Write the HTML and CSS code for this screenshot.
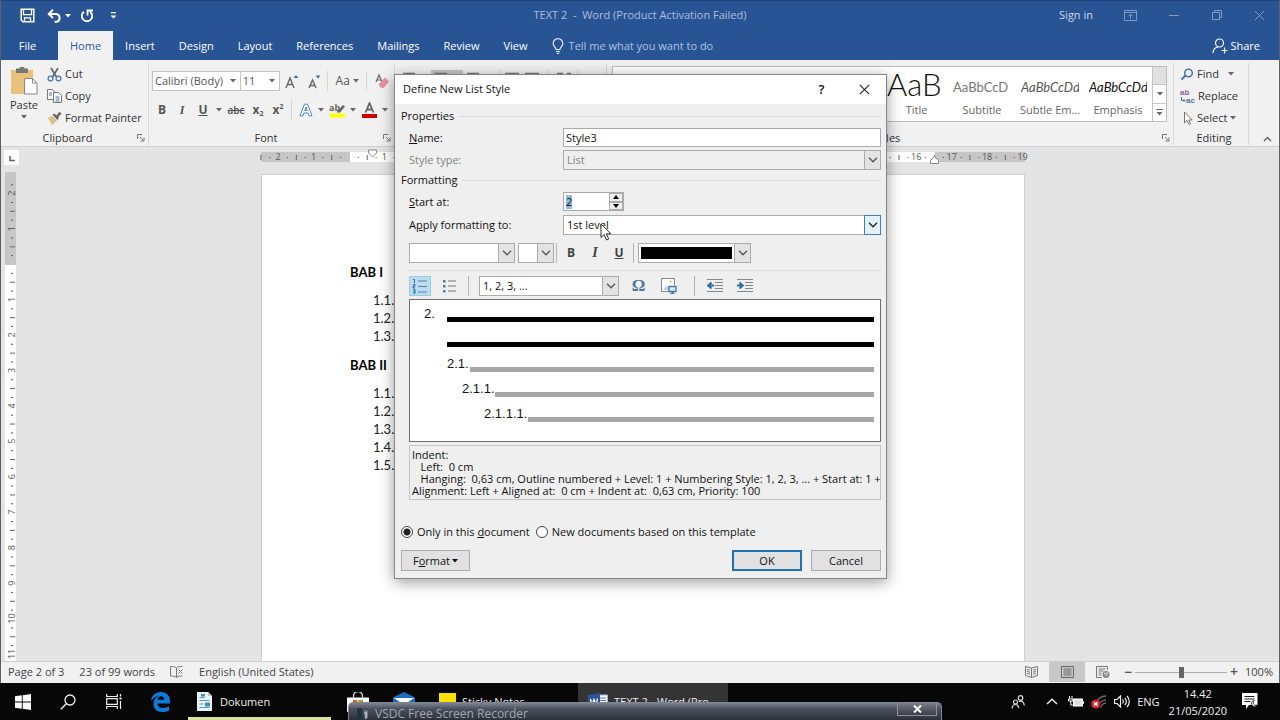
FILE: index.html
```html
<!DOCTYPE html>
<html lang="en">
<head>
<meta charset="utf-8">
<title>TEXT 2 - Word</title>
<link rel="stylesheet" href="styles.css">
</head>
<body>
<svg class="defs" aria-hidden="true">
  <symbol id="caret" viewBox="0 0 6 4"><path d="M0 0h6L3 3.5z" fill="currentColor"/></symbol>
  <symbol id="chev" viewBox="0 0 10 6"><path d="M1 .8l4 4 4-4" fill="none" stroke="currentColor" stroke-width="1.3"/></symbol>
  <symbol id="launch" viewBox="0 0 8 8"><path d="M.5 5V.5H5M3 3l3.5 3.5M7 3.5V7H3.5" fill="none" stroke="#777"/></symbol>
</svg>

<div class="app">
  <header class="titlebar">
    <div class="quick">
      <button aria-label="Save"><svg width="15" height="15" viewBox="0 0 15 15"><path d="M1.2 1.2h12.6v12.6H3L1.2 12z" fill="none" stroke="#fff" stroke-width="1.5"/><path d="M3.5 1.5v5.2h8V1.5M4.5 14V9.800h6V14" fill="none" stroke="#fff" stroke-width="1.3"/></svg></button>
      <button aria-label="Undo"><svg width="15" height="14" viewBox="0 0 15 14"><path d="M2 5h7.500a4 4 0 0 1 0 7.800H7.500M6 .8L1.800 5 6 9" fill="none" stroke="#fff" stroke-width="2"/></svg></button>
      <button class="narrow" aria-label="Undo list"><svg width="6" height="4"><use href="#caret"/></svg></button>
      <button aria-label="Redo"><svg width="14" height="14" viewBox="0 0 14 14"><path d="M4 2.800a5.200 5.200 0 1 0 6 0M7.500 6.500V1.500H13" fill="none" stroke="#fff" stroke-width="1.800"/></svg></button>
      <button aria-label="Customize"><svg width="7" height="8" viewBox="0 0 7 8"><path d="M1 .7h5" stroke="#fff" stroke-width="1.2"/><path d="M.5 3.500h6L3.500 6.500z" fill="#fff"/></svg></button>
    </div>
    <h1 class="doc-title">TEXT 2&nbsp; -&nbsp; Word (Product Activation Failed)</h1>
    <div class="window-tools">
      <a class="signin" href="#">Sign in</a>
      <button aria-label="Ribbon options"><svg width="13" height="11" viewBox="0 0 13 11"><path d="M.5.500h12v10H.500zM.5 2.500h12M6.500 9V4.500M4.500 6.200l2-2 2 2" fill="none" stroke="#7d9bc8"/></svg></button>
      <button aria-label="Minimize"><svg width="10" height="10"><path d="M0 5.500h10" stroke="#7d9bc8"/></svg></button>
      <button aria-label="Restore"><svg width="10" height="10" viewBox="0 0 10 10"><path d="M.5 2.500h7v7h-7zM2.500 2.500v-2h7v7h-2" fill="none" stroke="#7d9bc8"/></svg></button>
      <button aria-label="Close"><svg width="11" height="11" viewBox="0 0 11 11"><path d="M1 1l9 9M10 1l-9 9" stroke="#7d9bc8"/></svg></button>
    </div>
  </header>

  <nav class="tabs">
    <button class="tab file">File</button>
    <button class="tab active">Home</button>
    <button class="tab">Insert</button>
    <button class="tab">Design</button>
    <button class="tab">Layout</button>
    <button class="tab">References</button>
    <button class="tab">Mailings</button>
    <button class="tab">Review</button>
    <button class="tab">View</button>
    <button class="tell"><svg width="12" height="16" viewBox="0 0 12 16"><path d="M4 11.500C4 9 1.200 8.500 1.200 5.400a4.800 4.800 0 0 1 9.600 0C10.800 8.500 8 9 8 11.500zM4 13.500h4M4.800 15.300h2.400" fill="none" stroke="#dfe8f5" stroke-width="1.200"/></svg>Tell me what you want to do</button>
    <button class="share"><svg width="16" height="16" viewBox="0 0 16 16"><circle cx="7.500" cy="5" r="4" fill="none" stroke="#fff" stroke-width="1.200"/><path d="M1 15c.2-3.500 2-5.500 5-6M9.500 12.500h6M12.500 9.500v6" fill="none" stroke="#fff" stroke-width="1.200"/></svg>Share</button>
  </nav>

  <section class="ribbon">
    <div class="group clipboard">
      <div class="group-body">
        <button class="paste"><svg width="28" height="28" viewBox="0 0 28 28"><path d="M1 3h22v24H1z" fill="#e8c27a"/><path d="M6 1.500h3.500a2.500 2.500 0 0 1 5 0H18V6H6z" fill="#777"/><path d="M14.500 11.500h8l4.500 4.500v11H14.500z" fill="#fff" stroke="#888"/><path d="M22.500 11.500V16H27" fill="none" stroke="#888"/></svg><span>Paste</span><svg width="6" height="4"><use href="#caret"/></svg></button>
        <div class="stack">
          <button><svg width="15" height="15" viewBox="0 0 15 15"><path d="M4 1l5.500 9M11 1L5.500 10" stroke="#666" stroke-width="1.700"/><circle cx="3.500" cy="11.500" r="2.400" fill="none" stroke="#4a78ab" stroke-width="1.300"/><circle cx="11.500" cy="11.500" r="2.400" fill="none" stroke="#4a78ab" stroke-width="1.300"/></svg>Cut</button>
          <button><svg width="15" height="14" viewBox="0 0 15 14"><path d="M.5.500h5l2 2v8h-7z" fill="#fff" stroke="#777"/><path d="M6.500 3.500h5l3 3v7h-8z" fill="#fff" stroke="#777"/><path d="M2 4h3M2 6h3M8.500 8h4M8.500 10h4M8.500 12h4" stroke="#4a78ab"/></svg>Copy</button>
          <button><svg width="15" height="14" viewBox="0 0 15 14"><path d="M1 7l4-2.500 5 5L5 14z" fill="#e3bd80"/><path d="M5.500 3.500l2-1 2 2L12.500.800l2 2-3.200 3 .5 1.500-1.500 1.700z" fill="#666"/></svg>Format Painter</button>
        </div>
      </div>
      <div class="group-label"><span>Clipboard</span><button aria-label="Clipboard settings"><svg width="8" height="8"><use href="#launch"/></svg></button></div>
    </div>

    <div class="group font">
      <div class="group-body rows">
        <div class="row">
          <label class="combo family"><select aria-label="Font"><option>Calibri (Body)</option></select><svg width="6" height="4"><use href="#caret"/></svg></label>
          <label class="combo size"><select aria-label="Font size"><option>11</option></select><svg width="6" height="4"><use href="#caret"/></svg></label>
          <button class="t24" aria-label="Grow font"><svg width="14" height="15" viewBox="0 0 14 15"><path d="M1 14L5 4l4 10M2.500 10.500h5" fill="none" stroke="#666" stroke-width="1.400"/><path d="M8.500 4L11 1l2.500 3z" fill="#41719c"/></svg></button>
          <button class="t20" aria-label="Shrink font"><svg width="13" height="15" viewBox="0 0 13 15"><path d="M1 14L4.500 6 8 14M2.200 11.500h4.600" fill="none" stroke="#666" stroke-width="1.400"/><path d="M7.500 1.500h5L10 4.500z" fill="#41719c"/></svg></button>
          <i class="sep"></i>
          <button class="t32 case">Aa<svg width="6" height="4"><use href="#caret"/></svg></button>
          <i class="sep"></i>
          <button class="t24" aria-label="Clear formatting"><svg width="15" height="15" viewBox="0 0 15 15"><path d="M1 8L4 1l3 7M2 6h4" fill="none" stroke="#666" stroke-width="1.200"/><path d="M3.500 10.500L10 3.500l4 4-5.500 6.500H6z" fill="#e790a4"/></svg></button>
        </div>
        <div class="row">
          <button class="t20 b">B</button><button class="t20 i">I</button><button class="t22 u">U</button><button class="t10" aria-label="Underline style"><svg width="6" height="4"><use href="#caret"/></svg></button>
          <button class="t24 s">abc</button><button class="t20 x">x<sub>2</sub></button><button class="t20 x">x<sup>2</sup></button>
          <i class="sep"></i>
          <button class="t22" aria-label="Text effects"><svg width="14" height="14" viewBox="0 0 14 14"><path d="M1 12.800L5.500 1.200h3L13 12.800h-3L9.200 10H4.800L4 12.800zM5.700 7.500h2.600L7 4z" fill="#fff" stroke="#4e88c0"/></svg></button><button class="t8" aria-label="Effects list"><svg width="6" height="4"><use href="#caret"/></svg></button>
          <button class="t24" aria-label="Highlight"><svg width="17" height="16" viewBox="0 0 17 16"><path d="M1 11.500h15v4H1z" fill="#ff0"/><text x="0" y="9" font-size="9" font-weight="bold" fill="#666">ab</text><path d="M8 9.500l6-6.500 2 1.500-5 6H8z" fill="#666"/></svg></button><button class="t8" aria-label="Highlight list"><svg width="6" height="4"><use href="#caret"/></svg></button>
          <button class="t24" aria-label="Font color"><svg width="15" height="16" viewBox="0 0 15 16"><path d="M0 12h15v4H0z" fill="#d00000"/><path d="M3.500 10.500L7.500 1l4 9.500M5 7.500h5" fill="none" stroke="#666" stroke-width="1.800"/></svg></button><button class="t8" aria-label="Color list"><svg width="6" height="4"><use href="#caret"/></svg></button>
        </div>
      </div>
      <div class="group-label"><span>Font</span><button aria-label="Font settings"><svg width="8" height="8"><use href="#launch"/></svg></button></div>
    </div>

    <div class="group paragraph">
      <div class="group-body">
        <svg width="180" height="16" viewBox="0 0 180 16"><path d="M30 0h32v16H30z" fill="#c5c5c5"/><path d="M2 3.500h12M34 3.500h12M66 3.500h12M104 3.500h14M124 3.500h14M156 3.500h6M166 3.500h4" stroke="#777" stroke-width="1.500"/><path d="M98.500 0v16M146.500 0v16M176.500 0v16" stroke="#d5d5d5"/></svg>
      </div>
    </div>

    <div class="group styles">
      <div class="group-body">
        <div class="gallery">
          <div class="cards">
            <button class="card"><b class="big">AaB</b><span>Title</span></button>
            <button class="card"><b class="subtitle">AaBbCcD</b><span>Subtitle</span></button>
            <button class="card"><b class="subtle">AaBbCcDd</b><span>Subtle Em...</span></button>
            <button class="card"><b class="emph">AaBbCcDd</b><span>Emphasis</span></button>
          </div>
          <div class="scroller">
            <button class="off" aria-label="Previous styles"></button>
            <button aria-label="Next styles"><svg width="6" height="4"><use href="#caret"/></svg></button>
            <button aria-label="More styles"><svg width="7" height="7" viewBox="0 0 7 7"><path d="M0 .5h7" stroke="#666"/><path d="M.5 3h6l-3 3.500z" fill="#666"/></svg></button>
          </div>
        </div>
      </div>
      <div class="group-label"><span>Styles</span><button aria-label="Style settings"><svg width="8" height="8"><use href="#launch"/></svg></button></div>
    </div>

    <div class="group editing">
      <div class="group-body">
        <div class="stack">
          <button><svg width="14" height="13" viewBox="0 0 14 13"><circle cx="8.500" cy="5" r="3.800" fill="none" stroke="#4a74a8" stroke-width="1.500"/><path d="M5.500 7.500L1.500 11.500" stroke="#4a74a8" stroke-width="2.200"/></svg>Find<svg class="gap" width="6" height="4"><use href="#caret"/></svg></button>
          <button class="replace"><svg width="15" height="18" viewBox="0 0 15 18"><text x="0" y="8" fill="#8a5f9e">ab</text><text x="6" y="16" fill="#4a74a8">ac</text><path d="M1.500 10v3.500h3M3.500 12l1.500 1.500L3.500 15" fill="none" stroke="#4a74a8"/></svg>Replace</button>
          <button><svg width="14" height="14" viewBox="0 0 14 14"><path d="M4.500 1v11l2.600-2.500L9 13.500l1.500-.8L8.700 9h3.500z" fill="#fff" stroke="#777"/></svg>Select<svg width="6" height="4"><use href="#caret"/></svg></button>
        </div>
      </div>
      <div class="group-label"><span>Editing</span></div>
    </div>
    <button class="collapse" aria-label="Collapse ribbon"><svg width="9" height="6" viewBox="0 0 9 6"><path d="M1 5l3.500-3.500L8 5" fill="none" stroke="#666" stroke-width="1.500"/></svg></button>
  </section>

  <main class="workspace">
    <div class="corner"><svg width="15" height="15" viewBox="0 0 15 15"><path d="M0 0h15v15H0z" fill="#fbfbfb"/><path d="M6 6v4.500h5" fill="none" stroke="#666" stroke-width="1.600"/></svg></div>
    <div class="hrule"><svg id="hruler" width="764" height="15" viewBox="0 0 764 15"></svg></div>
    <div class="vrule"><svg id="vruler" width="12" height="900" viewBox="0 0 12 900"></svg></div>
    <div class="canvas">
      <article class="page">
        <h2>BAB I</h2>
        <ul><li>1.1.</li><li>1.2.</li><li>1.3.</li></ul>
        <h2>BAB II</h2>
        <ul><li>1.1.</li><li>1.2.</li><li>1.3.</li><li>1.4.</li><li>1.5.</li></ul>
      </article>
    </div>
  </main>

  <footer class="status">
    <span>Page 2 of 3</span><span>23 of 99 words</span>
    <svg width="14" height="12" viewBox="0 0 14 12"><path d="M6.500 2C5 .5 3 .5.500.500v9.500c2.500 0 4.500 0 6 1.500zM6.500 2C8 .5 10 .5 12.500.500M6.500 11.500c1.500-1.500 3.500-1.500 6-1.500M8.500 3.500l4 4M12.500 3.500l-4 4" fill="none" stroke="#777"/></svg>
    <span>English (United States)</span>
    <div class="views">
      <button aria-label="Read mode"><svg width="13" height="12" viewBox="0 0 13 12"><path d="M6.500 2L.5.500v9l6 2 6-2v-9zM6.500 2v9M2 3.500l3 .7M2 5.500l3 .7M2 7.500l3 .7M11 3.500l-3 .7M11 5.500l-3 .7M11 7.500l-3 .7" fill="none" stroke="#777"/></svg></button>
      <button class="on" aria-label="Print layout"><svg width="13" height="12" viewBox="0 0 13 12"><path d="M.5.500h12v11H.500zM2.500 3h8M2.500 5h8M2.500 7h8M2.500 9h8" fill="none" stroke="#666"/></svg></button>
      <button aria-label="Web layout"><svg width="14" height="13" viewBox="0 0 14 13"><path d="M11.500 4V.500H.500v11H6M2.500 3h7M2.500 5h5M2.500 7h3M2.500 9h3" fill="none" stroke="#777"/><circle cx="10" cy="8.500" r="3.500" fill="#888"/><path d="M8 7l2 1 .5 2M10.500 6l1.500 2" stroke="#eee" fill="none"/></svg></button>
    </div>
    <div class="zoom"><button>−</button><input type="range" min="0" max="200" value="100" aria-label="Zoom"><button>+</button></div>
    <span class="pct">100%</span>
  </footer>

  <section class="dialog" role="dialog" aria-label="Define New List Style">
    <header class="dlg-title"><h2>Define New List Style</h2>
      <button class="help" aria-label="Help">?</button>
      <button aria-label="Close dialog"><svg width="11" height="11" viewBox="0 0 11 11"><path d="M.8.800l9.400 9.400M10.200.800L.800 10.200" stroke="#222" stroke-width="1.100"/></svg></button>
    </header>
    <form class="dlg-body">
      <div class="legend"><span>Properties</span></div>
      <div class="fields">
        <label for="name"><u>N</u>ame:</label><input id="name" class="box" value="Style3">
        <label for="type" class="dim">Style type:</label>
        <div class="drop dim"><select id="type" disabled><option>List</option></select><span><svg width="10" height="6"><use href="#chev"/></svg></span></div>
      </div>
      <div class="legend"><span>Formatting</span></div>
      <div class="fields second">
        <label for="start"><u>S</u>tart at:</label>
        <div class="spin"><input id="start" value="2"><div><button type="button" aria-label="Up"><svg width="6" height="4" viewBox="0 0 6 4"><path d="M0 4h6L3 0z"/></svg></button><button type="button" aria-label="Down"><svg width="6" height="4" viewBox="0 0 6 4"><path d="M0 0h6L3 4z"/></svg></button></div></div>
        <label for="apply">A<u>p</u>ply formatting to:</label>
        <div class="drop hot"><select id="apply"><option>1st level</option></select><span><svg width="10" height="6"><use href="#chev"/></svg></span></div>
      </div>
      <div class="tools">
        <div class="drop fam"><select aria-label="Level font"><option></option></select><span><svg width="10" height="6"><use href="#chev"/></svg></span></div>
        <div class="drop siz"><select aria-label="Level size"><option></option></select><span><svg width="10" height="6"><use href="#chev"/></svg></span></div>
        <i class="bar"></i>
        <button type="button" class="b">B</button><button type="button" class="i">I</button><button type="button" class="u">U</button>
        <i class="bar"></i>
        <div class="drop color"><select aria-label="Color"><option></option></select><em></em><span><svg width="10" height="6"><use href="#chev"/></svg></span></div>
      </div>
      <div class="tools lower">
        <button type="button" class="num" aria-label="Numbering"><svg width="16" height="16" viewBox="0 0 16 16"><path d="M6 3h9M6 8.500h9M6 14h9" stroke="#6a7d8c" stroke-width="1.200"/><path d="M1 1.500h1.500V5M1 6.500h2v1.700H1V10h2.200M1 11.700h2v3.500H1M1.500 13.500H3" fill="none" stroke="#2f6a9c"/></svg></button>
        <button type="button" class="bul" aria-label="Bullets"><svg width="13" height="14" viewBox="0 0 13 14"><path d="M5 2h8M5 7h8M5 12h8" stroke="#777" stroke-width="1.200"/><path d="M0 1h2.500v2.500H0zM0 6h2.500v2.500H0zM0 11h2.500v2.500H0z" fill="#4f7fa8"/></svg></button>
        <i class="bar"></i>
        <div class="drop style"><select aria-label="Number style"><option>1, 2, 3, ...</option></select><span><svg width="10" height="6"><use href="#chev"/></svg></span></div>
        <button type="button" class="omega" aria-label="Symbol">Ω</button>
        <button type="button" class="pic" aria-label="Picture"><svg width="16" height="16" viewBox="0 0 16 16"><path d="M8 13.500H.500V.500h13V7" fill="#fff" stroke="#888"/><path d="M2.500 11l3-3.500 2.500 2V12H2.500z" fill="#c3d4e0"/><circle cx="9.500" cy="3.500" r="1" fill="#e0b070"/><path d="M8 8.500h7v5H8zM11.500 13.500v2M9.500 15.500h4" fill="#dcebf5" stroke="#41789f" stroke-width="1.300"/></svg></button>
        <i class="bar"></i>
        <button type="button" class="ind" aria-label="Decrease indent"><svg width="16" height="14" viewBox="0 0 16 14"><path d="M0 .5h16M8 3.500h8M8 6.500h8M8 9.500h8M0 12.500h16" stroke="#888"/><path d="M7 6.500H2M4.500 3.500L1.200 6.500l3.300 3" fill="none" stroke="#2f6a9c" stroke-width="1.800"/></svg></button>
        <button type="button" class="ind" aria-label="Increase indent"><svg width="16" height="14" viewBox="0 0 16 14"><path d="M0 .5h16M8 3.500h8M8 6.500h8M8 9.500h8M0 12.500h16" stroke="#888"/><path d="M0 6.500h5M2.500 3.500l3.300 3-3.300 3" fill="none" stroke="#2f6a9c" stroke-width="1.800"/></svg></button>
      </div>
      <div class="preview">
        <div class="line l1"><span>2.</span><i></i></div>
        <div class="line l1"><span></span><i></i></div>
        <div class="line l2"><span>2.1.</span><i></i></div>
        <div class="line l3"><span>2.1.1.</span><i></i></div>
        <div class="line l4"><span>2.1.1.1.</span><i></i></div>
      </div>
      <div class="desc">Indent:
   Left:  0 cm
   Hanging:  0,63 cm, Outline numbered + Level: 1 + Numbering Style: 1, 2, 3, ... + Start at: 1 +
Alignment: Left + Aligned at:  0 cm + Indent at:  0,63 cm, Priority: 100</div>
      <div class="radios">
        <label><input type="radio" name="scope" checked><span>Only in this <u>d</u>ocument</span></label>
        <label><input type="radio" name="scope"><span>New documents based on this template</span></label>
      </div>
      <div class="actions">
        <button type="button" class="btn"><span>F<u>o</u>rmat</span><svg width="6" height="4"><use href="#caret"/></svg></button>
        <button type="button" class="btn ok">OK</button>
        <button type="button" class="btn">Cancel</button>
      </div>
    </form>
    <svg class="pointer" width="12" height="18" viewBox="0 0 12 18"><path d="M1 1v13.500l3.200-3 2.300 5.500 2.200-1-2.300-5.200H11z" fill="#fff" stroke="#333"/></svg>
  </section>
</div>

<footer class="taskbar">
  <button class="sq" aria-label="Start"><svg width="16" height="16" viewBox="0 0 16 16"><path d="M0 2.300l6.800-1v6.200H0zM7.700 1.200L16 0v7.500H7.700zM0 8.400h6.800v6.300L0 13.700zM7.700 8.400H16V16l-8.300-1.200z" fill="#fff"/></svg></button>
  <button class="sq" aria-label="Search"><svg width="16" height="16" viewBox="0 0 16 16"><circle cx="10" cy="6" r="5" fill="none" stroke="#eee" stroke-width="1.300"/><path d="M6.500 9.500L.800 15.200" stroke="#eee" stroke-width="1.500"/></svg></button>
  <button class="sq" aria-label="Task view"><svg width="16" height="15" viewBox="0 0 16 15"><path d="M.7 0v2.500h10.600V0M.7 15v-2.500h10.600V15M.7 4.700h10.600v5.600H.700zM14.500 0v2.500M14.500 7v8" fill="none" stroke="#eee" stroke-width="1.200"/><path d="M13.500 3.500h2v2h-2z" fill="#eee"/></svg></button>
  <button class="sq edge" aria-label="Edge"><svg width="19" height="20" viewBox="0 0 19 20"><path d="M0 9C.5 3.500 4.500 0 10 0c5.500 0 9 4 9 9v2.500H6.500c.3 3 2.500 4.500 5.500 4.500 2 0 4-.5 6-1.700v4.200c-2 1-4.300 1.500-7 1.500-5 0-8.500-3-8.500-8 0-3.500 1.800-6.300 5-7.700C5.800 4.200 2.500 5.500 0 9zM6.700 7.800h6.500c0-2.300-1-3.600-3.100-3.600-2 0-3.100 1.400-3.400 3.600z" fill="#0b7bdb"/></svg></button>
  <button class="task doc"><svg width="15" height="19" viewBox="0 0 15 19"><path d="M0 0h11l4 4v15H0z" fill="#e9f2f5"/><path d="M11 0v4h4" fill="#b5c8d0"/><path d="M2.500 5.500h5M2.500 8.500h10M2.500 15.500h10M2.500 12h4" stroke="#5b9bbd"/><path d="M8 10.500h5v4H8zM4 2h4v2.500H4z" fill="#3f8fc0"/></svg>Dokumen</button>
  <button class="sq store" aria-label="Store"><svg width="22" height="20" viewBox="0 0 22 20"><path d="M6.500 5.500V4a4 4 0 0 1 9 0v1.500" fill="none" stroke="#ddd" stroke-width="1.300"/><path d="M0 5.500h22V20H0z" fill="#fff"/><path d="M6 8h4.500v4.500H6z" fill="#e05524"/><path d="M11.500 8H16v4.500h-4.500z" fill="#7cb32a"/><path d="M6 13.500h4.500V18H6z" fill="#0b90d8"/><path d="M11.500 13.500H16V18h-4.500z" fill="#f3b520"/></svg></button>
  <button class="sq" aria-label="Mail"><svg width="22" height="20" viewBox="0 0 22 20"><path d="M0 5.500L11 0l11 5.500V20H0z" fill="#1a6fc0"/><path d="M1 6h20l-10 7z" fill="#fff"/></svg></button>
  <button class="task sticky"><svg width="17" height="18" viewBox="0 0 17 18"><path d="M0 0h17v10l-6 .5-2 7.500H0z" fill="#ffe000"/><path d="M17 9.500l-5 1L8 18z" fill="#a89200"/></svg>Sticky Notes</button>
  <button class="task word"><svg width="20" height="18" viewBox="0 0 20 18"><path d="M10 2h9.500v14H10z" fill="#fff" stroke="#9cb6dc"/><path d="M12 5h6M12 7.500h6M12 10h6M12 12.500h6" stroke="#5a7fc0"/><path d="M0 2l12-2v18L0 16z" fill="#2a5599"/><path d="M2.500 6l1.500 6 2-5.500 2 5.500 1.500-6.500" fill="none" stroke="#fff" stroke-width="1.300"/></svg>TEXT 2 - Word (Pro...</button>
  <div class="tray">
    <svg width="14" height="14" viewBox="0 0 14 14"><circle cx="9.500" cy="3" r="2.300" fill="none" stroke="#ddd" stroke-width="1.200"/><circle cx="4.500" cy="7" r="2" fill="none" stroke="#ddd" stroke-width="1.200"/><path d="M1 13.500c.3-2.500 1.500-4 3.500-4s3 1.500 3.300 3.500M8 6.500c3-1 5 .5 5.300 4" fill="none" stroke="#ddd" stroke-width="1.200"/></svg>
    <svg class="up" width="12" height="7" viewBox="0 0 12 7"><path d="M1 6l5-4.700L11 6" fill="none" stroke="#eee" stroke-width="1.400"/></svg>
    <svg width="16" height="11" viewBox="0 0 16 11"><path d="M5.700 3.200h8.500v6.500H5.700z" fill="#ddd" stroke="#fff" stroke-width="1.400"/><path d="M15.300 5v3M1.500 0v2.500M4 0v2.500M.5 3h4.500v2H.500zM2.800 5v4h2" fill="none" stroke="#fff"/></svg>
    <svg width="16" height="15" viewBox="0 0 16 15"><path d="M7 14a8 8 0 0 1 8-8M10 14a5 5 0 0 1 5-5M5 12C5 6 9 2 15 2" fill="none" stroke="#666" stroke-width="1.300"/><circle cx="4.800" cy="10" r="4.500" fill="#d8222e"/><path d="M3 8.200l3.600 3.600M6.600 8.200L3 11.800" stroke="#fff" stroke-width="1.300"/></svg>
    <svg width="16" height="13" viewBox="0 0 16 13"><path d="M.6 4.500h2.500L6.500 1v11L3.100 8.500H.600zM8.500 4.500c1 1 1 3 0 4M10.800 2.800c2 2 2 5.400 0 7.400M13 1c3 3 3 8 0 11" fill="none" stroke="#eee" stroke-width="1.200"/></svg>
    <span class="lang">ENG</span>
    <time class="clock">14.42<br>21/05/2020</time>
    <svg width="16" height="17" viewBox="0 0 16 17"><path d="M0 0h15.500v12H7l-3 4v-4H0z" fill="#fff"/><path d="M2.500 3.500h10M2.500 6h10M2.500 8.500h6" stroke="#222"/><path d="M12.500 7.500a3 3 0 1 0 2.500 4.500 2.500 2.500 0 0 1-2.500-4.500z" fill="#fff" stroke="#222" stroke-width=".800"/></svg>
  </div>
</footer>

<aside class="recorder">
  <svg width="14" height="14" viewBox="0 0 14 14"><path d="M0 1h5v12H0z" fill="#234"/><path d="M6 2l5 1v8l-3 2zM7 4h3" fill="#a9b3bb" stroke="#33414d"/></svg>
  <span>VSDC Free Screen Recorder</span>
  <button aria-label="Close recorder"><svg width="9" height="8" viewBox="0 0 9 8"><path d="M1 .5l7 7M8 .5l-7 7" stroke="#fff" stroke-width="2"/></svg></button>
</aside>
<script src="app.js"></script>
</body>
</html>
```
FILE: styles.css
```css
* { box-sizing: border-box; }
body {
  margin: 0; height: 100vh; display: flex; flex-direction: column; overflow: hidden;
  font: 11px/14px "Open Sans", "Noto Sans", sans-serif; color: #333; background: #050505;
}
.defs { position: absolute; width: 0; height: 0; }
button { font: inherit; color: inherit; background: none; border: 0; padding: 0; display: flex; align-items: center; justify-content: center; white-space: nowrap; }
input, select { font: inherit; color: inherit; margin: 0; min-width: 0; }
select { appearance: none; background: transparent; border: 0; width: 100%; height: 100%; opacity: 1; }
h1, h2 { margin: 0; font: inherit; }
svg { flex: none; display: block; }

.app { flex: 1; min-height: 0; display: flex; flex-direction: column; border: solid #5c6066; border-width: 0 1px; }

/* Title bar and tabs */
.titlebar { height: 31px; background: #285493; color: #fff; display: grid; grid-template-columns: 1fr auto 1fr; align-items: center; border-top: 1px solid #1d4378; }
.quick { display: flex; align-items: center; padding: 0 0 1px 13px; }
.quick button { width: 27px; }
.quick .narrow { width: 7px; margin: 0 2px 0 -4px; }
.doc-title { color: #a9bfe0; padding-bottom: 2px; }
.window-tools { display: flex; justify-content: flex-end; align-items: center; padding-bottom: 2px; }
.window-tools button { width: 43px; height: 28px; padding-left: 4px; }
.signin { color: #c9d7ec; text-decoration: none; padding-right: 14px; }
.tabs { height: 29px; background: #285493; color: #fff; display: flex; align-items: stretch; }
.tab { padding: 0 12px; }
.tab.file { width: 57px; padding: 0 4px 0 0; }
.tab.active { background: #f1f1f1; color: #2b579a; }
.tell { color: #adc3e4; gap: 5px; padding-left: 12px; }
.share { margin-left: auto; gap: 2px; padding-right: 19px; }

/* Ribbon */
.ribbon { height: 87px; background: #f1f1f1; border-bottom: 1px solid #d0d0d0; display: flex; padding: 3px 0 1px; }
.group { display: flex; flex-direction: column; border-right: 1px solid #d8d8d8; }
.group-body { flex: 1; display: flex; }
.group-label { height: 14px; display: flex; align-items: center; }
.group-label span { flex: 1; text-align: center; }
.group-label button { width: 14px; }
.clipboard { width: 148px; }
.paste { flex-direction: column; width: 46px; justify-content: flex-start; padding-top: 4px; gap: 3px; }
.stack { display: flex; flex-direction: column; }
.stack button { height: 22px; gap: 3px; justify-content: flex-start; }
.stack .gap { margin-left: 6px; }
.paste svg, .row svg, .stack svg { color: #666; }
.replace text { font: bold 8px "Liberation Sans", sans-serif; }
.font { width: 246px; padding-left: 3px; }
.rows { flex-direction: column; padding-top: 8px; gap: 9px; }
.row { display: flex; align-items: center; height: 20px; color: #555; }
.combo { display: grid; height: 20px; border: 1px solid #c3c3c3; background: #fff; align-items: center; }
.combo > * { grid-area: 1 / 1; }
.combo svg { justify-self: end; margin-right: 4px; pointer-events: none; }
.combo select { padding: 0 2px; }
.combo.family { width: 89px; }
.combo.size { width: 40px; border-left: 0; }
.t8 { width: 8px; } .t10 { width: 10px; } .t20 { width: 20px; } .t22 { width: 22px; } .t24 { width: 24px; } .t32 { width: 32px; }
.case { gap: 3px; font-size: 12px; }
.b { font-weight: 700; } .s { text-decoration: line-through; font-weight: 600; font-size: 10px; }
.i { font: italic bold 12px "Liberation Serif", serif; }
.u { font-weight: 700; text-decoration: underline; }
.row .b, .row .u { font-size: 12px; }
.x { font-weight: 700; font-size: 12px; align-items: baseline; }
.x sub, .x sup { font-size: 7px; line-height: 7px; }
.x sub { align-self: flex-end; }
.x sup { align-self: flex-start; }
.sep { width: 1px; height: 20px; margin: 0 3px; background: #d5d5d5; }
.paragraph { width: 212px; padding: 7px 0 0 6px; }
.styles { flex: 1; padding-left: 5px; min-width: 0; }
.gallery { flex: 1; margin: 3px 6px 9px 0; display: flex; background: #fff; border: 1px solid #bdbdbd; }
.cards { flex: 1; display: flex; justify-content: flex-end; overflow: hidden; }
.card { width: 68px; flex-direction: column; justify-content: flex-start; overflow: hidden; color: #666; padding: 0 5px; align-items: flex-start; }
.card b { font: 13px/18px Lato, sans-serif; width: 100%; height: 36px; padding-top: 11px; text-align: left; overflow: hidden; }
.card b.big { font: 300 31px/34px Lato, sans-serif; color: #111; padding-top: 0; }
.card:first-child { padding: 0 2px 0 7px; }
.card span { align-self: center; }
.card b.subtitle { color: #777; }
.card b.subtle { font-style: italic; color: #555; }
.card b.emph { font-style: italic; color: #111; }
.scroller { width: 14px; display: flex; flex-direction: column; border-left: 1px solid #c5c5c5; color: #666; }
.scroller button { flex: 1; }
.scroller button + button { border-top: 1px solid #c5c5c5; }
.scroller .off { background: #e1e1e1; }
.editing { width: 75px; padding-left: 6px; }
.collapse { width: 30px; align-items: flex-end; padding: 0 0 3px 6px; }

/* Document area */
.workspace { flex: 1; min-height: 0; display: grid; grid-template: 25px minmax(0, 1fr) / 20px 1fr; background: #e4e4e4; overflow: hidden; }
.corner { padding: 3px 0 0 3px; }
.hrule, .canvas { display: flex; justify-content: center; padding-right: 14px; }
.hrule { padding-top: 3px; }
.hrule svg { overflow: visible; }
.vrule { padding-left: 4px; overflow: hidden; }
.hrule text, .vrule text { font-size: 9px; fill: #555; text-anchor: middle; }
.canvas { padding-top: 2px; }
.page { width: 764px; background: #fff; border: solid #cfcfcf; border-width: 1px 1px 0; padding: 88px 0 0 88px; font: 13px/18px Lato, sans-serif; color: #222; }
.page h2 { font-weight: 700; color: #000; }
.page ul { list-style: none; margin: 10px 0 11px; padding: 0 0 0 23px; }

/* Status bar */
.status { height: 22px; background: #f1f1f1; border-top: 1px solid #cfcfcf; display: flex; align-items: center; gap: 15px; padding: 0 6px 1px 7px; color: #444; }
.views { margin-left: auto; display: flex; align-self: stretch; }
.views button { width: 36px; }
.views .on { background: #c8c8c8; }
.zoom { display: flex; align-items: center; margin-left: -15px; }
.zoom button { width: 14px; font-size: 14px; font-weight: 600; color: #555; }
.zoom input { width: 92px; height: 12px; appearance: none; background: linear-gradient(#aaa, #aaa) center / 100% 1px no-repeat; }
.zoom input::-webkit-slider-thumb { appearance: none; width: 5px; height: 11px; background: #666; }
.pct { margin-left: -11px; }

/* Dialog */
.dialog { position: absolute; top: 74px; left: 50%; margin-left: -246px; width: 493px; background: #efefef; border: 1px solid #858585; box-shadow: 0 3px 14px rgba(0, 0, 0, .4); color: #111; }
.dlg-title { height: 29px; background: #fff; display: flex; align-items: center; padding: 0 0 1px 8px; }
.dlg-title h2 { flex: 1; }
.dlg-title button { width: 43px; height: 28px; }
.dlg-title .help { font-size: 13px; font-weight: 600; }
.dlg-body { padding: 4px 5px 7px 6px; display: flex; flex-direction: column; }
.legend { display: flex; align-items: center; gap: 5px; height: 16px; }
.legend::after { content: ""; flex: 1; height: 1px; background: #dcdcdc; }
.fields { display: grid; grid-template-columns: 154px 1fr; row-gap: 3px; align-items: center; padding: 4px 0 2px 8px; }
.box { height: 19px; border: 1px solid #ababab; background: #fff; padding: 0 2px; }
.dim { color: #838383; }
.dialog select { color: inherit; padding: 0 3px; opacity: 1; }
.drop { display: grid; height: 20px; border: 1px solid #ababab; background: #fff; }
.drop > * { grid-area: 1 / 1; }
.drop > span { justify-self: end; width: 17px; pointer-events: none; display: flex; align-items: center; justify-content: center; background: #e3e3e3; border: 1px solid #ababab; margin: -1px; color: #555; }
.drop.dim { background: #efefef; }
.drop.hot > span { background: #e2f1fb; border-color: #3c7fb1; color: #222; }
.second { row-gap: 4px; padding-bottom: 0; }
.spin { display: flex; width: 61px; height: 19px; border: 1px solid #ababab; background: #fff; }
.spin input { flex: 1; border: 0; outline: 0; padding: 0 2px; background: transparent; }
.spin input::selection { background: #8fbbdc; color: #111; }
.spin div { width: 14px; display: flex; flex-direction: column; }
.spin button { flex: 1; background: #eee; border: 1px solid #ababab; }
.tools { display: flex; align-items: center; margin-left: 8px; height: 36px; border-bottom: 1px solid #dcdcdc; }
.tools button { width: 24px; height: 20px; color: #444; }
.tools .i { font-size: 14px; }
.tools .u { font-size: 12px; }
.tools .b { font-size: 12px; }
.bar { width: 1px; height: 20px; background: #b5b5b5; margin: 0 2px; }
.fam { width: 106px; margin-right: 3px; }
.siz { width: 36px; }
.tools .color { width: 113px; margin-left: 2px; }
.color em { margin: 3px 18px 3px 2px; background: #000; pointer-events: none; }
.lower { height: 28px; border: 0; padding-top: 1px; }
.tools .num { width: 22px; background: #b9dcf3; border: 1px solid #9cc9e8; }
.tools .bul { width: 37px; }
.lower .bar { margin: 0 9px 0 0; }
.style { width: 140px; margin-left: 1px; }
.tools .omega { width: 39px; font: bold 17px "Liberation Serif", serif; color: #47799f; }
.tools .pic { width: 21px; margin-right: 15px; }
.tools .ind { width: 21px; margin-right: 9px; }
.preview { margin-left: 8px; border: 1px solid #6f6f6f; background: #fff; padding: 6px 6px 19px 14px; display: flex; flex-direction: column; gap: 9px; font: 13px/16px "Liberation Sans", sans-serif; }
.line { display: flex; align-items: flex-end; height: 16px; }
.line i { flex: 1; height: 5px; background: #a6a6a6; }
.l1 i { background: #000; }
.l1 span { width: 23px; }
.l2 { padding-left: 23px; } .l2 span { width: 23px; }
.l3 { padding-left: 38px; } .l3 span { width: 33px; }
.l4 { padding-left: 60px; } .l4 span { width: 44px; }
.desc { margin: 3px 0 0 8px; border: 1px solid #c4c4c4; padding: 3px 0 2px 2px; line-height: 12px; white-space: pre; }
.radios { display: flex; gap: 6px; padding: 25px 0 11px; }
.radios label { display: flex; align-items: center; gap: 4px; }
.radios input { appearance: none; width: 12px; height: 12px; border: 1px solid #444; border-radius: 50%; background: #fff; }
.radios input:checked { background: radial-gradient(#222 3px, #fff 4px); }
.actions { display: flex; gap: 9px; }
.btn { width: 70px; height: 21px; background: #e1e1e1; border: 1px solid #ababab; gap: 2px; }
.btn:first-child { width: 69px; margin-right: auto; }
.btn.ok { border: 2px solid #2370b0; }
.pointer { position: absolute; left: 205px; top: 148px; }

/* Taskbar */
.taskbar { height: 37px; background: #070707; color: #eee; display: flex; align-items: stretch; }
.sq { width: 46px; }
.taskbar .sq:first-child { width: 45px; }
.task { width: 149px; justify-content: flex-start; gap: 8px; padding-left: 10px; overflow: hidden; }
.task.doc { width: 143px; border-bottom: 3px solid #d7e39c; margin-left: 5px; padding-top: 3px; padding-left: 9px; }
.store { margin-left: 4px; }
.task.sticky { width: 151px; padding-left: 12px; gap: 6px; }
.task.word { background: #343434; width: 150px; gap: 6px; }
.tray { margin-left: auto; display: flex; align-items: center; gap: 7px; padding-right: 22px; }
.tray .up { margin: 0 3px 0 14px; }
.clock { text-align: center; line-height: 17px; margin: 0 8px 0 2px; }

/* Recorder window peeking over the taskbar */
.recorder { position: absolute; left: 348px; bottom: 0; width: 594px; height: 18px; display: flex; align-items: center; gap: 4px; padding: 4px 4px 0 8px; background: linear-gradient(#7d838f, #4a505d 35%, #2c303b); border: 1px solid #80858e; border-bottom: 0; border-radius: 5px 5px 0 0; color: #a3a7ad; }
.recorder span { flex: 1; font-size: 12px; }
.recorder button { width: 40px; height: 13px; align-self: flex-start; margin-top: -4px; background: linear-gradient(#777c88, #3a3e48); border: 1px solid #8d929b; border-top: 0; }
```
FILE: app.js
```js
const NS = "http://www.w3.org/2000/svg";
const CM = 35.45;

function add(parent, tag, attrs, text) {
  const el = document.createElementNS(NS, tag);
  for (const key in attrs) el.setAttribute(key, attrs[key]);
  if (text !== undefined) el.textContent = text;
  parent.appendChild(el);
}

// Horizontal ruler: body area between the two margins is white.
// Centimetres 2 to 15 lie below the dialog and carry no number.
const h = document.getElementById("hruler");
add(h, "rect", { x: 0, y: 2, width: 764, height: 10, fill: "#c6c6c6" });
add(h, "rect", { x: 89, y: 2, width: 585, height: 10, fill: "#fff" });
for (let q = -10; q <= 76; q++) {
  const x = 88 + q * CM / 4;
  const cm = q / 4;
  if (q % 4 === 0) {
    if (cm !== 0 && (cm < 2 || cm > 15)) add(h, "text", { x: x, y: 10 }, Math.abs(cm));
  } else if (q % 2 === 0) {
    add(h, "rect", { x: x, y: 5, width: 1, height: 5, fill: "#666" });
  } else {
    add(h, "rect", { x: x, y: 7, width: 1, height: 1, fill: "#555" });
  }
}
add(h, "path", { d: "M107.5 0h8v3l-4 4-4-4z", fill: "#fff", stroke: "#888" });
add(h, "path", { d: "M669.5 13.500h8v-3l-4-4-4 4z", fill: "#fff", stroke: "#888" });

// Vertical ruler, numbers turned to read upwards.
const v = document.getElementById("vruler");
add(v, "rect", { x: 0, y: 0, width: 11, height: 900, fill: "#fff" });
add(v, "rect", { x: 0, y: 0, width: 11, height: 93, fill: "#c6c6c6" });
for (let q = -9; q <= 90; q++) {
  const y = 92 + q * CM / 4;
  if (q % 4 === 0) {
    if (q !== 0) add(v, "text", { x: 0, y: 0, transform: `translate(10 ${y}) rotate(-90)` }, Math.abs(q / 4));
  } else if (q % 2 === 0) {
    add(v, "rect", { x: 5, y: y, width: 5, height: 1, fill: "#666" });
  } else {
    add(v, "rect", { x: 6, y: y, width: 2, height: 1, fill: "#555" });
  }
}

const start = document.getElementById("start");
start.focus({ preventScroll: true });
start.select();
```
